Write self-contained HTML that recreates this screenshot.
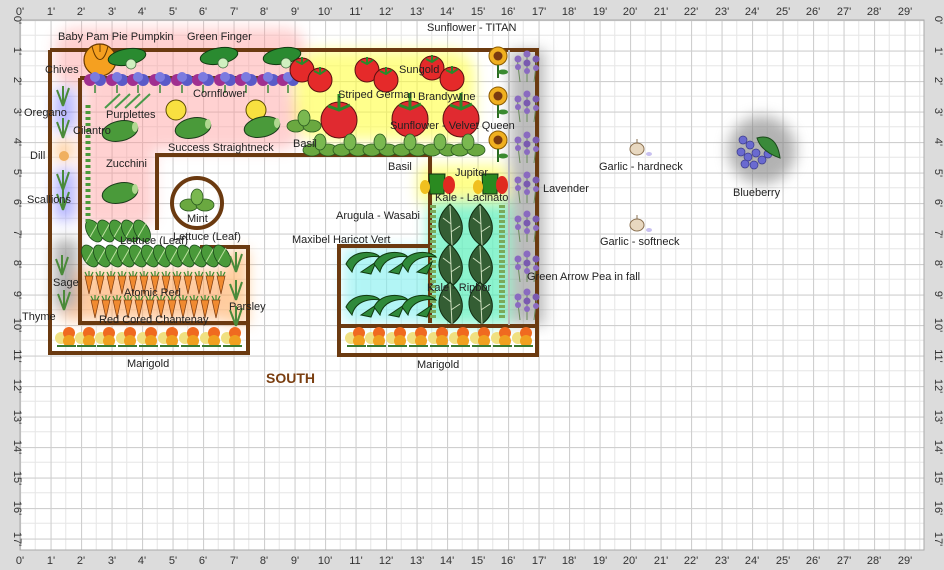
<!DOCTYPE html>
<html><head><meta charset="utf-8"><style>
html,body{margin:0;padding:0;background:#fff;}
svg{display:block;font-family:"Liberation Sans",sans-serif;}
.l{font-size:11px;fill:#222;}
.r{font-size:11px;fill:#333;}
</style></head><body>
<svg width="944" height="570" viewBox="0 0 944 570" xmlns="http://www.w3.org/2000/svg">
<defs>
<pattern id="g" x="20" y="20" width="30.5" height="30.5" patternUnits="userSpaceOnUse">
<rect width="30.5" height="30.5" fill="#fff"/>
<path d="M15.25 0V30.5M0 15.25H30.5" stroke="#e6e6e6" stroke-width="1"/>
<path d="M0.5 0V30.5M0 0.5H30.5" stroke="#cfcfcf" stroke-width="1.2"/>
</pattern>
<filter id="b" x="-50%" y="-50%" width="200%" height="200%"><feGaussianBlur stdDeviation="7"/></filter>
<g id="corn"><circle cx="-5" cy="0" r="6" fill="#a03090"/><circle cx="5" cy="0" r="6" fill="#5a5ac8"/><circle cx="0" cy="-3" r="5" fill="#7b7be0"/><path d="M0 5V13" stroke="#3a8a3a" stroke-width="1.5"/></g>
<g id="tom"><circle r="12" fill="#e52a2a" stroke="#5a1010" stroke-width="1"/><path d="M-6 -9L0 -6L6 -10M0 -6V-13" stroke="#2a8a2a" stroke-width="2" fill="none"/></g>
<g id="btom"><circle r="18" fill="#e02a30" stroke="#5a1010" stroke-width="1"/><path d="M-11 -14L0 -10L11 -15M0 -10V-26" stroke="#2a8a2a" stroke-width="3" fill="none"/></g>
<g id="basil"><ellipse cx="-8" cy="0" rx="9" ry="6" fill="#6aa840" stroke="#2a5a20" stroke-width=".8"/><ellipse cx="8" cy="0" rx="9" ry="6" fill="#6aa840" stroke="#2a5a20" stroke-width=".8"/><ellipse cx="0" cy="-8" rx="6" ry="8" fill="#7ab850" stroke="#2a5a20" stroke-width=".8"/></g>
<g id="sun"><circle r="9" fill="#f0b020" stroke="#8a5a00" stroke-width="1"/><circle r="4.5" fill="#7a3a10"/><path d="M0 9V22" stroke="#2a6a20" stroke-width="2"/><ellipse cx="5" cy="16" rx="5" ry="2.5" fill="#3a8a30"/></g>
<g id="lav"><path d="M0 20V-10M-7 20L-10 -5M7 20L10 -5" stroke="#6a8a5a" stroke-width="1"/><circle cx="0" cy="-8" r="3.5" fill="#8a6ac0"/><circle cx="-9" cy="-3" r="3.5" fill="#8a6ac0"/><circle cx="9" cy="-3" r="3.5" fill="#7a5ab0"/><circle cx="0" cy="1" r="3.5" fill="#7a5ab0"/><circle cx="-9" cy="5" r="3" fill="#8a6ac0"/><circle cx="9" cy="6" r="3" fill="#8a6ac0"/><circle cx="0" cy="9" r="3" fill="#8a6ac0"/></g>
<g id="mari"><circle cx="-5" cy="2" r="6" fill="#f0e080"/><circle cx="3" cy="-3" r="6" fill="#f06a20"/><circle cx="3" cy="5" r="6" fill="#f0a020"/><path d="M-9 10H10" stroke="#3a7a30" stroke-width="2"/></g>
<g id="car"><path d="M-4 -6L4 -6L0 12Z" fill="#f08a30" stroke="#7a3a10" stroke-width=".7"/><path d="M0 -6V-11M-2 -6L-4 -10M2 -6L4 -10" stroke="#3a8a30" stroke-width="1.2"/></g>
<g id="let"><ellipse rx="7" ry="12" transform="rotate(-30)" fill="#4a9a3a" stroke="#1a4a1a" stroke-width=".8"/><path d="M-4 6L4 -8" stroke="#bde0a0" stroke-width="1"/></g>
<g id="kale"><path d="M0 22C-16 12 -18 -6 -2 -20C12 -6 16 10 0 22Z" fill="#345e34" stroke="#102a10" stroke-width="1"/><path d="M0 22L-2 -18M-1 0L-9 -6M-1 8L8 2" stroke="#cfe0c0" stroke-width="1"/></g>
<g id="bean"><path d="M-18 2C-12 -12 10 -12 16 -5C4 -7 -9 -3 -12 10Z" fill="#2f8a3a" stroke="#103a10" stroke-width="1"/><path d="M-3 10L12 0L7 12Z" fill="#2f8a3a" stroke="#103a10" stroke-width="1"/></g>
<g id="zuc"><ellipse rx="18" ry="10" transform="rotate(-12)" fill="#4a9a3a" stroke="#1a3a1a" stroke-width="1"/><ellipse cx="15" cy="-4" rx="3" ry="5" fill="#b0d890"/></g>
<g id="gf"><ellipse rx="19" ry="8" transform="rotate(-10)" fill="#2a8a30" stroke="#103a10" stroke-width="1"/><circle cx="4" cy="7" r="5" fill="#d0f0c0" stroke="#3a6a3a" stroke-width=".7"/></g>
<g id="pep"><path d="M-8 -9H8L7 11H-7Z" fill="#2a8a20" stroke="#103010" stroke-width="1"/><ellipse cx="-12" cy="4" rx="5" ry="7" fill="#f0c020"/><ellipse cx="12" cy="2" rx="6" ry="9" fill="#e02a20"/></g>
<g id="herb"><path d="M0 10L-6 -6M0 10L6 -8M0 10V-10" stroke="#4a8a3a" stroke-width="2"/></g>
<g id="garlic"><ellipse cx="0" cy="2" rx="7" ry="6" fill="#e8d8c0" stroke="#8a7050" stroke-width="1"/><path d="M0 -4V-8" stroke="#8a7050"/><ellipse cx="12" cy="7" rx="3" ry="2" fill="#c8c0f0"/></g>
</defs>

<rect width="944" height="570" fill="url(#g)"/>

<g filter="url(#b)" opacity=".45">
<rect x="55" y="28" width="250" height="60" rx="20" fill="#ff9a9a"/>
<rect x="120" y="88" width="180" height="62" rx="20" fill="#ff9a9a"/>
<rect x="82" y="88" width="72" height="140" rx="15" fill="#ff9a9a"/>
</g>
<g filter="url(#b)" opacity=".6">
<rect x="295" y="50" width="180" height="90" rx="25" fill="#ffff40"/>
<rect x="418" y="165" width="90" height="40" rx="10" fill="#ffff40"/>
<rect x="62" y="270" width="180" height="50" fill="#ffa860"/>
<rect x="344" y="248" width="88" height="75" fill="#80f0f0"/>
<rect x="428" y="200" width="85" height="125" fill="#40eeb0"/>
<rect x="510" y="50" width="35" height="275" fill="#909090"/>
<circle cx="762" cy="150" r="34" fill="#808080"/>
<rect x="55" y="90" width="20" height="40" fill="#8080ff"/>
<rect x="55" y="170" width="20" height="50" fill="#8080ff"/>
<rect x="55" y="140" width="18" height="20" fill="#ffb060"/>
<rect x="54" y="240" width="24" height="70" fill="#808080"/>
<rect x="226" y="250" width="22" height="75" fill="#ffb060"/>
</g>

<g stroke="#6b3a10" stroke-width="4" fill="none" stroke-linejoin="miter">
<path d="M50 50H537V355H339V246H430V155H157V230"/>
<path d="M50 50V353H248V247H200"/>
<path d="M80 78H300M80 78V323H248"/>
<path d="M339 326H537M430 155V323"/>
<circle cx="197" cy="203" r="25"/>
</g>
<path d="M509 50V325" stroke="#bbb" stroke-width="2"/>

<g>
<circle cx="100" cy="60" r="16" fill="#f5a020" stroke="#6a3a00" stroke-width="1.2"/><path d="M92 46C96 64 104 64 108 46M100 44V52" stroke="#6a3a00" fill="none"/>
<use href="#gf" x="127" y="57"/><use href="#gf" x="219" y="56"/><use href="#gf" x="282" y="56"/>
<use href="#corn" x="95" y="80"/><use href="#corn" x="117" y="80"/><use href="#corn" x="138" y="80"/><use href="#corn" x="160" y="80"/><use href="#corn" x="182" y="80"/><use href="#corn" x="203" y="80"/><use href="#corn" x="225" y="80"/><use href="#corn" x="246" y="80"/><use href="#corn" x="268" y="80"/><use href="#corn" x="288" y="80"/>
<path d="M105 108L120 94M115 108L130 94M125 108L140 94M135 108L150 94" stroke="#4a9a4a" stroke-width="2"/>
<use href="#tom" x="302" y="70"/><use href="#tom" x="320" y="80"/><use href="#tom" x="367" y="70"/><use href="#tom" x="386" y="80"/><use href="#tom" x="432" y="68"/><use href="#tom" x="452" y="79"/>
<use href="#btom" x="339" y="120"/><use href="#btom" x="410" y="119"/><use href="#btom" x="461" y="119"/>
<circle cx="176" cy="110" r="10" fill="#f8e040" stroke="#5a4a00"/><circle cx="256" cy="110" r="10" fill="#f8e040" stroke="#5a4a00"/>
<use href="#zuc" x="193" y="128"/><use href="#zuc" x="262" y="127"/><use href="#zuc" x="120" y="131"/><use href="#zuc" x="120" y="193"/>
<use href="#basil" x="304" y="126"/><use href="#basil" x="320" y="150"/><use href="#basil" x="350" y="150"/><use href="#basil" x="380" y="150"/><use href="#basil" x="410" y="150"/><use href="#basil" x="440" y="150"/><use href="#basil" x="468" y="150"/>
<use href="#sun" x="498" y="56"/><use href="#sun" x="498" y="96"/><use href="#sun" x="498" y="140"/>
<use href="#lav" x="527" y="62"/><use href="#lav" x="527" y="102"/><use href="#lav" x="527" y="143"/><use href="#lav" x="527" y="183"/><use href="#lav" x="527" y="222"/><use href="#lav" x="527" y="262"/><use href="#lav" x="527" y="300"/>
<use href="#pep" x="437" y="183"/><use href="#pep" x="490" y="183"/>
<path d="M433 205V320M502 205V320" stroke="#7aaa5a" stroke-width="6" stroke-dasharray="3 2"/>
<use href="#kale" x="452" y="224"/><use href="#kale" x="482" y="224"/><use href="#kale" x="452" y="264"/><use href="#kale" x="482" y="264"/><use href="#kale" x="452" y="302"/><use href="#kale" x="482" y="302"/>
<use href="#bean" x="364" y="262"/><use href="#bean" x="392" y="262"/><use href="#bean" x="420" y="262"/><use href="#bean" x="364" y="305"/><use href="#bean" x="392" y="305"/><use href="#bean" x="420" y="305"/>
<use href="#let" x="94" y="231"/><use href="#let" x="106" y="231"/><use href="#let" x="118" y="231"/><use href="#let" x="130" y="231"/><use href="#let" x="142" y="231"/>
<use href="#let" x="90" y="256"/><use href="#let" x="102" y="256"/><use href="#let" x="114" y="256"/><use href="#let" x="126" y="256"/><use href="#let" x="138" y="256"/><use href="#let" x="150" y="256"/><use href="#let" x="162" y="256"/><use href="#let" x="174" y="256"/><use href="#let" x="186" y="256"/><use href="#let" x="198" y="256"/><use href="#let" x="210" y="256"/><use href="#let" x="222" y="256"/>
<use href="#car" x="89" y="282"/><use href="#car" x="100" y="282"/><use href="#car" x="111" y="282"/><use href="#car" x="122" y="282"/><use href="#car" x="133" y="282"/><use href="#car" x="144" y="282"/><use href="#car" x="155" y="282"/><use href="#car" x="166" y="282"/><use href="#car" x="177" y="282"/><use href="#car" x="188" y="282"/><use href="#car" x="199" y="282"/><use href="#car" x="210" y="282"/><use href="#car" x="221" y="282"/>
<use href="#car" x="95" y="306"/><use href="#car" x="106" y="306"/><use href="#car" x="117" y="306"/><use href="#car" x="128" y="306"/><use href="#car" x="139" y="306"/><use href="#car" x="150" y="306"/><use href="#car" x="161" y="306"/><use href="#car" x="172" y="306"/><use href="#car" x="183" y="306"/><use href="#car" x="194" y="306"/><use href="#car" x="205" y="306"/><use href="#car" x="216" y="306"/>
<use href="#herb" x="236" y="262"/><use href="#herb" x="236" y="290"/><use href="#herb" x="236" y="316"/>
<use href="#mari" x="66" y="336"/><use href="#mari" x="86" y="336"/><use href="#mari" x="106" y="336"/><use href="#mari" x="127" y="336"/><use href="#mari" x="148" y="336"/><use href="#mari" x="169" y="336"/><use href="#mari" x="190" y="336"/><use href="#mari" x="211" y="336"/><use href="#mari" x="232" y="336"/>
<use href="#mari" x="356" y="336"/><use href="#mari" x="376" y="336"/><use href="#mari" x="397" y="336"/><use href="#mari" x="418" y="336"/><use href="#mari" x="439" y="336"/><use href="#mari" x="460" y="336"/><use href="#mari" x="481" y="336"/><use href="#mari" x="502" y="336"/><use href="#mari" x="523" y="336"/>
<path d="M88 105V225" stroke="#4a9a3a" stroke-width="5" stroke-dasharray="3 3"/>
<use href="#herb" x="63" y="96"/><use href="#herb" x="63" y="128"/><use href="#herb" x="63" y="180"/><use href="#herb" x="63" y="200"/><use href="#herb" x="62" y="265"/><use href="#herb" x="64" y="300"/>
<circle cx="64" cy="156" r="5" fill="#f0b060"/>
<use href="#basil" x="197" y="205"/>
<use href="#garlic" x="637" y="147"/><use href="#garlic" x="637" y="223"/>
<g fill="#6a6ad0" stroke="#3a3a8a" stroke-width=".7"><circle cx="743" cy="140" r="4"/><circle cx="750" cy="145" r="4"/><circle cx="741" cy="152" r="4"/><circle cx="748" cy="157" r="4"/><circle cx="756" cy="153" r="4"/><circle cx="762" cy="160" r="4"/><circle cx="754" cy="165" r="4"/><circle cx="745" cy="164" r="4"/><circle cx="768" cy="154" r="4"/></g>
<path d="M757 138C770 134 778 142 780 158C768 154 760 148 757 138Z" fill="#3a8a3a" stroke="#1a4a1a"/>
</g>

<g class="l">
<text x="58" y="40">Baby Pam Pie Pumpkin</text>
<text x="187" y="40">Green Finger</text>
<text x="427" y="31">Sunflower - TITAN</text>
<text x="45" y="73">Chives</text>
<text x="399" y="73">Sungold</text>
<text x="193" y="97">Cornflower</text>
<text x="338" y="98">Striped German</text>
<text x="418" y="100">Brandywine</text>
<text x="24" y="116">Oregano</text>
<text x="106" y="118">Purplettes</text>
<text x="73" y="134">Cilantro</text>
<text x="390" y="129">Sunflower - Velvet Queen</text>
<text x="293" y="147">Basil</text>
<text x="168" y="151">Success Straightneck</text>
<text x="30" y="159">Dill</text>
<text x="388" y="170">Basil</text>
<text x="106" y="167">Zucchini</text>
<text x="599" y="170">Garlic - hardneck</text>
<text x="455" y="176">Jupiter</text>
<text x="543" y="192">Lavender</text>
<text x="733" y="196">Blueberry</text>
<text x="27" y="203">Scallions</text>
<text x="435" y="201">Kale - Lacinato</text>
<text x="187" y="222">Mint</text>
<text x="336" y="219">Arugula - Wasabi</text>
<text x="120" y="244">Lettuce (Leaf)</text>
<text x="173" y="240">Lettuce (Leaf)</text>
<text x="292" y="243">Maxibel Haricot Vert</text>
<text x="600" y="245">Garlic - softneck</text>
<text x="527" y="280">Green Arrow Pea in fall</text>
<text x="53" y="286">Sage</text>
<text x="427" y="291">Kale - Ripbor</text>
<text x="124" y="296">Atomic Red</text>
<text x="229" y="310">Parsley</text>
<text x="22" y="320">Thyme</text>
<text x="99" y="323">Red Cored Chantenay</text>
<text x="127" y="367">Marigold</text>
<text x="417" y="368">Marigold</text>
</g>
<text x="266" y="383" font-size="14" font-weight="bold" fill="#7a3e10">SOUTH</text>

<rect x="0" y="0" width="944" height="20" fill="#dcdcdc"/>
<rect x="0" y="550" width="944" height="20" fill="#dcdcdc"/>
<rect x="0" y="0" width="20" height="570" fill="#dcdcdc"/>
<rect x="924" y="0" width="20" height="570" fill="#dcdcdc"/>
<path d="M20 20H924V550H20Z" fill="none" stroke="#aaa"/>
<g class="r" text-anchor="middle">
<text x="20" y="15">0'</text><text x="51" y="15">1'</text><text x="81" y="15">2'</text><text x="112" y="15">3'</text><text x="142" y="15">4'</text><text x="173" y="15">5'</text><text x="203" y="15">6'</text><text x="234" y="15">7'</text><text x="264" y="15">8'</text><text x="295" y="15">9'</text><text x="325" y="15">10'</text><text x="356" y="15">11'</text><text x="386" y="15">12'</text><text x="417" y="15">13'</text><text x="447" y="15">14'</text><text x="478" y="15">15'</text><text x="508" y="15">16'</text><text x="539" y="15">17'</text><text x="569" y="15">18'</text><text x="600" y="15">19'</text><text x="630" y="15">20'</text><text x="661" y="15">21'</text><text x="691" y="15">22'</text><text x="722" y="15">23'</text><text x="752" y="15">24'</text><text x="783" y="15">25'</text><text x="813" y="15">26'</text><text x="844" y="15">27'</text><text x="874" y="15">28'</text><text x="905" y="15">29'</text>
<text x="20" y="564">0'</text><text x="51" y="564">1'</text><text x="81" y="564">2'</text><text x="112" y="564">3'</text><text x="142" y="564">4'</text><text x="173" y="564">5'</text><text x="203" y="564">6'</text><text x="234" y="564">7'</text><text x="264" y="564">8'</text><text x="295" y="564">9'</text><text x="325" y="564">10'</text><text x="356" y="564">11'</text><text x="386" y="564">12'</text><text x="417" y="564">13'</text><text x="447" y="564">14'</text><text x="478" y="564">15'</text><text x="508" y="564">16'</text><text x="539" y="564">17'</text><text x="569" y="564">18'</text><text x="600" y="564">19'</text><text x="630" y="564">20'</text><text x="661" y="564">21'</text><text x="691" y="564">22'</text><text x="722" y="564">23'</text><text x="752" y="564">24'</text><text x="783" y="564">25'</text><text x="813" y="564">26'</text><text x="844" y="564">27'</text><text x="874" y="564">28'</text><text x="905" y="564">29'</text>
</g>
<g class="r" text-anchor="middle">
<text transform="translate(14,20) rotate(90)">0'</text><text transform="translate(14,51) rotate(90)">1'</text><text transform="translate(14,81) rotate(90)">2'</text><text transform="translate(14,112) rotate(90)">3'</text><text transform="translate(14,142) rotate(90)">4'</text><text transform="translate(14,173) rotate(90)">5'</text><text transform="translate(14,203) rotate(90)">6'</text><text transform="translate(14,234) rotate(90)">7'</text><text transform="translate(14,264) rotate(90)">8'</text><text transform="translate(14,295) rotate(90)">9'</text><text transform="translate(14,325) rotate(90)">10'</text><text transform="translate(14,356) rotate(90)">11'</text><text transform="translate(14,386) rotate(90)">12'</text><text transform="translate(14,417) rotate(90)">13'</text><text transform="translate(14,447) rotate(90)">14'</text><text transform="translate(14,478) rotate(90)">15'</text><text transform="translate(14,508) rotate(90)">16'</text><text transform="translate(14,539) rotate(90)">17'</text>
<text transform="translate(935,20) rotate(90)">0'</text><text transform="translate(935,51) rotate(90)">1'</text><text transform="translate(935,81) rotate(90)">2'</text><text transform="translate(935,112) rotate(90)">3'</text><text transform="translate(935,142) rotate(90)">4'</text><text transform="translate(935,173) rotate(90)">5'</text><text transform="translate(935,203) rotate(90)">6'</text><text transform="translate(935,234) rotate(90)">7'</text><text transform="translate(935,264) rotate(90)">8'</text><text transform="translate(935,295) rotate(90)">9'</text><text transform="translate(935,325) rotate(90)">10'</text><text transform="translate(935,356) rotate(90)">11'</text><text transform="translate(935,386) rotate(90)">12'</text><text transform="translate(935,417) rotate(90)">13'</text><text transform="translate(935,447) rotate(90)">14'</text><text transform="translate(935,478) rotate(90)">15'</text><text transform="translate(935,508) rotate(90)">16'</text><text transform="translate(935,539) rotate(90)">17'</text>
</g>
</svg>
</body></html>
